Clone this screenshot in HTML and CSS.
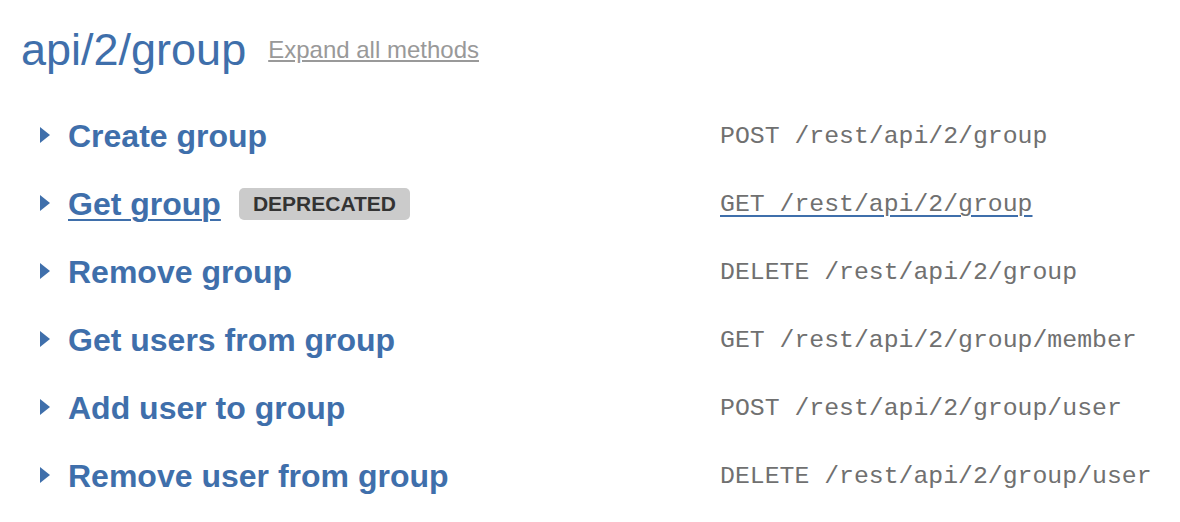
FILE: index.html
```html
<!DOCTYPE html>
<html>
<head>
<meta charset="utf-8">
<link rel="stylesheet" href="styles.css">
</head>
<body>
<div class="resource">
  <div class="resource-head">
    <h2 class="resource-title">api/2/group</h2>
    <a class="expand-all" href="#">Expand all methods</a>
  </div>
  <ul class="methods">
    <li class="method">
      <div class="method-name">
        <svg class="caret" width="10" height="16" viewBox="0 0 10 16"><path d="M0 0 L10 8 L0 16 Z" fill="#3f6fab"/></svg>
        <span class="label">Create group</span>
      </div>
      <span class="path">POST /rest/api/2/group</span>
    </li>
    <li class="method">
      <div class="method-name">
        <svg class="caret" width="10" height="16" viewBox="0 0 10 16"><path d="M0 0 L10 8 L0 16 Z" fill="#3f6fab"/></svg>
        <a class="label link" href="#">Get group</a>
        <span class="badge">DEPRECATED</span>
      </div>
      <a class="path link-path" href="#">GET /rest/api/2/group</a>
    </li>
    <li class="method">
      <div class="method-name">
        <svg class="caret" width="10" height="16" viewBox="0 0 10 16"><path d="M0 0 L10 8 L0 16 Z" fill="#3f6fab"/></svg>
        <span class="label">Remove group</span>
      </div>
      <span class="path">DELETE /rest/api/2/group</span>
    </li>
    <li class="method">
      <div class="method-name">
        <svg class="caret" width="10" height="16" viewBox="0 0 10 16"><path d="M0 0 L10 8 L0 16 Z" fill="#3f6fab"/></svg>
        <span class="label">Get users from group</span>
      </div>
      <span class="path">GET /rest/api/2/group/member</span>
    </li>
    <li class="method">
      <div class="method-name">
        <svg class="caret" width="10" height="16" viewBox="0 0 10 16"><path d="M0 0 L10 8 L0 16 Z" fill="#3f6fab"/></svg>
        <span class="label">Add user to group</span>
      </div>
      <span class="path">POST /rest/api/2/group/user</span>
    </li>
    <li class="method">
      <div class="method-name">
        <svg class="caret" width="10" height="16" viewBox="0 0 10 16"><path d="M0 0 L10 8 L0 16 Z" fill="#3f6fab"/></svg>
        <span class="label">Remove user from group</span>
      </div>
      <span class="path">DELETE /rest/api/2/group/user</span>
    </li>
  </ul>
</div>
</body>
</html>
```
FILE: styles.css
```css
* { box-sizing: border-box; }
html, body { margin: 0; padding: 0; background: #fff; }
body { font-family: "Liberation Sans", Arial, sans-serif; }

.resource { padding: 26px 0 0 21px; }

.resource-head {
  display: flex;
  align-items: flex-end;
  gap: 22px;
  height: 48px;
}
.resource-title {
  margin: 0;
  font-size: 45px;
  font-weight: normal;
  color: #3f6fab;
  line-height: 48px;
}
.expand-all {
  font-size: 24px;
  color: #999;
  text-decoration: underline;
  padding-bottom: 11px;
  line-height: 26px;
}

.methods {
  list-style: none;
  margin: 0;
  padding: 28px 0 0 0;
}
.method {
  display: flex;
  align-items: center;
  height: 68px;
}
.method-name {
  display: flex;
  align-items: center;
  width: 699px;
  padding-left: 19px;
}
.caret { flex: none; margin-right: 18px; margin-top: -2px; }
.label {
  font-size: 32px;
  font-weight: bold;
  color: #3f6fab;
  text-decoration: none;
}
.label.link { text-decoration: underline; text-decoration-thickness: 2px; text-underline-offset: 4px; }
.badge {
  margin-left: 18px;
  background: #cbcbcb;
  color: #333;
  font-size: 21px;
  font-weight: bold;
  border-radius: 5px;
  height: 32px;
  line-height: 32px;
  padding: 0 14px;
}
.path {
  font-family: "Liberation Mono", "Courier New", monospace;
  font-size: 24.8px;
  color: #707070;
  text-decoration: none;
}
.link-path {
  text-decoration: underline;
  text-decoration-color: #3f6fab;
  text-decoration-thickness: 2px;
  text-underline-offset: 4px;
}
```
